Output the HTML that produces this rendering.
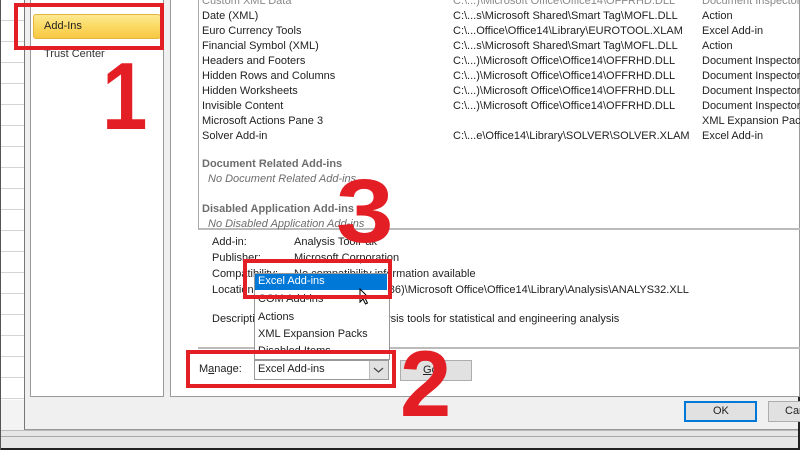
<!DOCTYPE html>
<html><head><meta charset="utf-8"><style>
*{margin:0;padding:0;box-sizing:border-box}
body{width:800px;height:450px;overflow:hidden;position:relative;background:#fff;font-family:"Liberation Sans",sans-serif;font-size:11px;color:#222}
.a{position:absolute;white-space:nowrap}
.grid{position:absolute;left:0;top:0;width:24px;height:400px;background:repeating-linear-gradient(#fff 0 20px,#d4d4d4 20px 21px)}
.red{position:absolute;border:4px solid #e31e24}
.num{position:absolute;font-family:"Liberation Sans",sans-serif;font-weight:bold;color:#e31e24;line-height:1;transform-origin:0 0}
.row{height:15px;line-height:15px}
.hd{color:#6d6d6d;font-weight:bold}
.it{color:#6d6d6d;font-style:italic}
</style></head><body>
<div class="grid"></div>
<div class="a" style="left:0;top:400px;width:24px;height:30px;background:#f3f3f3"></div>
<div class="a" style="left:24px;top:0;width:776px;height:430px;background:#f0f0f0;border-left:1px solid #777;border-bottom:1px solid #999"></div>
<div class="a" style="left:0;top:430px;width:800px;height:20px;background:#e6e6e6;border-top:1px solid #bbb"></div>
<div class="a" style="left:0;top:436px;width:800px;height:1px;background:#aaa"></div>
<div class="a" style="left:0;top:448px;width:800px;height:2px;background:#222"></div>
<div class="a" style="left:0;top:0;width:1px;height:450px;background:#555"></div>
<div class="a" style="left:798px;top:0;width:2px;height:450px;background:#222"></div>
<!-- nav -->
<div class="a" style="left:30px;top:-2px;width:134px;height:399px;background:#fff;border:1px solid #999"></div>
<div class="a" style="left:33px;top:14px;width:128px;height:25px;border:1px solid #e2b53c;border-radius:3px;background:linear-gradient(#fde992,#fbd963 50%,#f7c843)"></div>
<div class="a" style="left:44px;top:20px">Add-Ins</div>
<div class="a" style="left:44px;top:48px;color:#333">Trust Center</div>
<!-- right panel -->
<div class="a" style="left:170px;top:-2px;width:630px;height:399px;background:#fff;border:1px solid #999"></div>
<div class="a" style="left:198px;top:-2px;width:602px;height:232px;border-left:1px solid #aaa;border-bottom:2px solid #bbb"></div>
<div class="a" style="left:202px;top:-6px">
<div class="row" style="color:#888">Custom XML Data</div>
<div class="row">Date (XML)</div><div class="row">Euro Currency Tools</div><div class="row">Financial Symbol (XML)</div><div class="row">Headers and Footers</div><div class="row">Hidden Rows and Columns</div><div class="row">Hidden Worksheets</div><div class="row">Invisible Content</div><div class="row">Microsoft Actions Pane 3</div><div class="row">Solver Add-in</div>
</div>
<div class="a" style="left:453px;top:-6px">
<div class="row" style="color:#888">C:\...)\Microsoft Office\Office14\OFFRHD.DLL</div>
<div class="row">C:\...s\Microsoft Shared\Smart Tag\MOFL.DLL</div><div class="row">C:\...Office\Office14\Library\EUROTOOL.XLAM</div><div class="row">C:\...s\Microsoft Shared\Smart Tag\MOFL.DLL</div><div class="row">C:\...)\Microsoft Office\Office14\OFFRHD.DLL</div><div class="row">C:\...)\Microsoft Office\Office14\OFFRHD.DLL</div><div class="row">C:\...)\Microsoft Office\Office14\OFFRHD.DLL</div><div class="row">C:\...)\Microsoft Office\Office14\OFFRHD.DLL</div><div class="row">&nbsp;</div><div class="row">C:\...e\Office14\Library\SOLVER\SOLVER.XLAM</div>
</div>
<div class="a" style="left:702px;top:-6px">
<div class="row" style="color:#888">Document Inspector</div>
<div class="row">Action</div><div class="row">Excel Add-in</div><div class="row">Action</div><div class="row">Document Inspector</div><div class="row">Document Inspector</div><div class="row">Document Inspector</div><div class="row">Document Inspector</div><div class="row">XML Expansion Packs</div><div class="row">Excel Add-in</div>
</div>
<div class="a hd" style="left:202px;top:158px">Document Related Add-ins</div>
<div class="a it" style="left:208px;top:173px">No Document Related Add-ins</div>
<div class="a hd" style="left:202px;top:203px">Disabled Application Add-ins</div>
<div class="a it" style="left:208px;top:218px">No Disabled Application Add-ins</div>
<div class="a" style="left:212px;top:234px;line-height:16px">Add-in:<br>Publisher:<br>Compatibility:<br>Location:<br><br><span style="position:relative;top:-3px">Description:</span></div>
<div class="a" style="left:294px;top:234px;line-height:16px">Analysis ToolPak<br>Microsoft Corporation<br>No compatibility information available<br>C:\Program Files (x86)\Microsoft Office\Office14\Library\Analysis\ANALYS32.XLL<br><br><span style="position:relative;top:-3px">Provides data analysis tools for statistical and engineering analysis</span></div>
<div class="a" style="left:198px;top:347px;width:602px;height:2px;background:#bbb"></div>
<!-- manage -->
<div class="a" style="left:199px;top:363px">M<u>a</u>nage:</div>
<div class="a" style="left:254px;top:360px;width:135px;height:20px;border:1px solid #999;background:#fff"></div>
<div class="a" style="left:258px;top:363px">Excel Add-ins</div>
<div class="a" style="left:369px;top:361px;width:19px;height:18px;background:#e1e1e1;border-left:1px solid #bbb"></div>
<svg class="a" style="left:373px;top:366px" width="11" height="8"><path d="M1 2 L5.5 6 L10 2" fill="none" stroke="#444" stroke-width="1.2"/></svg>
<div class="a" style="left:400px;top:360px;width:72px;height:21px;border:1px solid #adadad;background:#e1e1e1"></div>
<div class="a" style="left:423px;top:364px"><u>G</u>o</div>
<!-- dropdown -->
<div class="a" style="left:254px;top:273px;width:136px;height:87px;background:#fff;border:1px solid #999"></div>
<div class="a" style="left:255px;top:274px;width:132px;height:16px;background:#0078d7"></div>
<div class="a" style="left:258px;top:275px;color:#fff">Excel Add-ins</div>
<div class="a" style="left:258px;top:293px">COM Add-ins</div>
<div class="a" style="left:258px;top:311px">Actions</div>
<div class="a" style="left:258px;top:328px">XML Expansion Packs</div>
<div class="a" style="left:258px;top:345px">Disabled Items</div>
<svg class="a" style="left:359px;top:288px" width="12" height="18"><path d="M1 1 L1 14 L4 11 L6.5 16 L8.5 15 L6 10 L10 10 Z" fill="#fff" stroke="#000" stroke-width="1"/></svg>
<!-- buttons -->
<div class="a" style="left:684px;top:401px;width:73px;height:21px;border:2px solid #0078d7;background:#e1e1e1"></div>
<div class="a" style="left:713px;top:405px">OK</div>
<div class="a" style="left:768px;top:401px;width:40px;height:21px;border:1px solid #adadad;background:#e1e1e1"></div>
<div class="a" style="left:785px;top:405px">Cancel</div>
<!-- annotations -->
<div class="red" style="left:14px;top:3px;width:150px;height:47px"></div>
<div class="red" style="left:243px;top:259px;width:149px;height:40px"></div>
<div class="red" style="left:186px;top:350px;width:210px;height:38px"></div>
<div class="num" style="left:102px;top:49px;font-size:96px;transform:scaleX(0.85)">1</div>
<div class="num" style="left:336px;top:167px;font-size:90px;transform:scaleX(1.15)">3</div>
<div class="num" style="left:400px;top:337px;font-size:94px;transform:scaleX(0.98)">2</div>
</body></html>
